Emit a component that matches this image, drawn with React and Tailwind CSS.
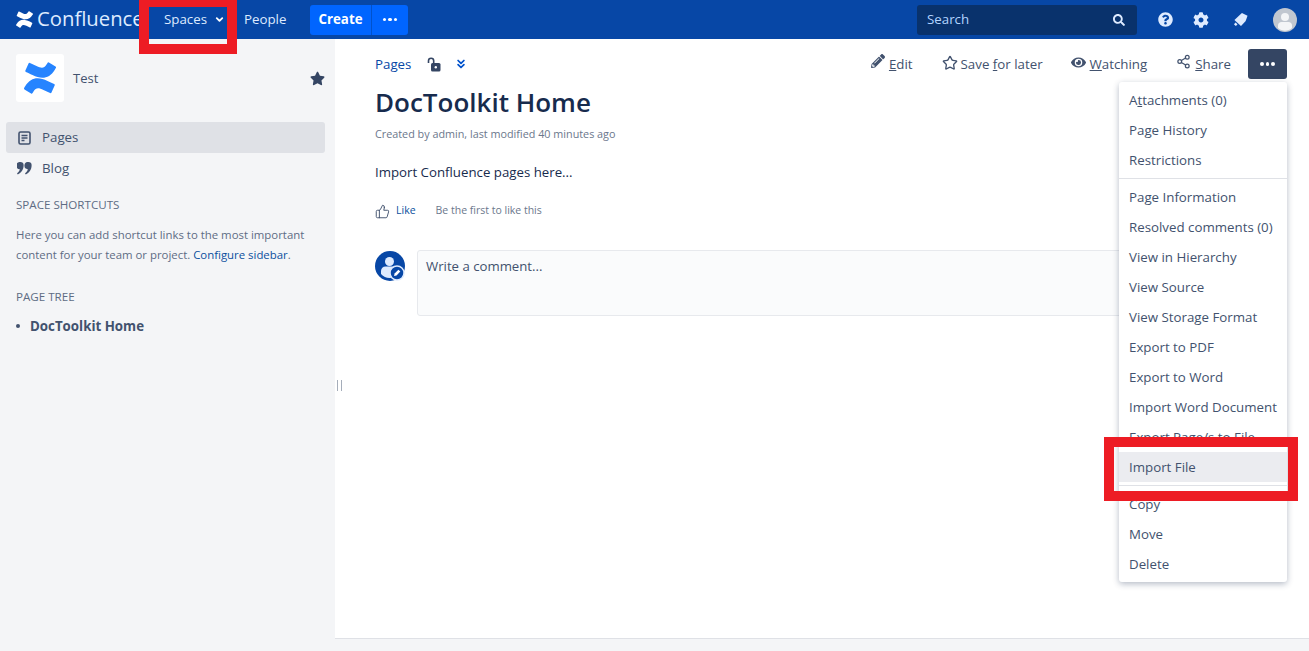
import { FaSearch, FaQuestionCircle, FaStar, FaPencilAlt, FaEye, FaCog } from "react-icons/fa";
import { SiConfluence } from "react-icons/si";
import { Star, Share2, ThumbsUp, ChevronsDown, ChevronDown } from "lucide-react";

const font = "font-['Open_Sans','Noto_Sans',sans-serif]";

function Dots({ className }) {
  return (
    <span className={"flex gap-[2px] " + className}>
      <span className="w-[3.5px] h-[3.5px] rounded-full bg-white" />
      <span className="w-[3.5px] h-[3.5px] rounded-full bg-white" />
      <span className="w-[3.5px] h-[3.5px] rounded-full bg-white" />
    </span>
  );
}

function Avatar({ size, bg, fg }) {
  return (
    <svg width={size} height={size} viewBox="0 0 24 24">
      <circle cx="12" cy="12" r="12" fill={bg} />
      <circle cx="12" cy="9" r="4" fill={fg} />
      <path d="M5 20v-2.500c0-2 1.500-3.500 3.500-3.500h7c2 0 3.500 1.500 3.500 3.500v2.500c-2 1.800-4.500 2.700-7 2.700s-5-.9-7-2.700z" fill={fg} />
    </svg>
  );
}

function CommentAvatar() {
  return (
    <svg width="30" height="30" viewBox="0 0 30 30">
      <circle cx="15" cy="15" r="15" fill="#0747a6" />
      <circle cx="14.500" cy="10.500" r="4.500" fill="#deebff" />
      <path d="M6 23v-3c0-2.500 2-4.500 4.500-4.500h8c2.500 0 4.500 2 4.500 4.500v3c-2.500 2.500-5 4-8.500 4S8.500 25.500 6 23z" fill="#deebff" />
      <circle cx="22" cy="22" r="7" fill="#0747a6" stroke="#deebff" strokeWidth="1.500" />
      <path d="M19 25l.6-2.500 3.800-3.800 1.900 1.900-3.800 3.800z" fill="#fff" />
    </svg>
  );
}

function TopNav() {
  return (
    <header className="h-[39px] shrink-0 bg-[#0747a6] flex items-center text-[#deebff] text-[13.300px]">
      <div className="flex items-center ml-[16px] w-[148px] shrink-0">
        <SiConfluence className="text-white w-[17px] h-[17px]" />
        <span className="ml-[4px] text-[20.300px] text-[#deebff] leading-none pb-[2px]">Confluence</span>
      </div>
      <div className="flex items-center w-[80px] shrink-0">
        <span>Spaces</span>
        <ChevronDown className="ml-[7px] w-[11px] h-[11px] text-white" strokeWidth={4} />
      </div>
      <span className="w-[66px] shrink-0">People</span>
      <div className="h-[30px] flex rounded-[3px] overflow-hidden bg-[#0065ff] text-white">
        <span className="w-[62px] flex items-center justify-center font-bold border-r border-[#0052cc]">Create</span>
        <span className="w-[36px] flex items-center justify-center"><Dots /></span>
      </div>
      <div className="ml-auto w-[220px] h-[30px] rounded-[3px] bg-[#09326c] flex items-center justify-between pl-[10px] pr-[12px] text-[#b3d4ff]">
        <span>Search</span>
        <FaSearch className="text-[#deebff] w-[12px] h-[12px]" />
      </div>
      <FaQuestionCircle className="ml-[21px] w-[15px] h-[15px] text-[#deebff]" />
      <FaCog className="ml-[20px] w-[16px] h-[16px] text-[#deebff]" />
      <svg className="ml-[24px]" width="15" height="15" viewBox="0 0 16 16">
        <path d="M9.500 1l6 3-2 5.500-5 5.500-7-6.500z" fill="#deebff" />
        <path d="M1 13l1.800-1.800 2 2L3 15z" fill="#deebff" />
      </svg>
      <span className="ml-[25px] mr-[12px]"><Avatar size={24} bg="#c1c7d0" fg="#f4f5f7" /></span>
    </header>
  );
}

function Sidebar() {
  return (
    <aside className="w-[335px] shrink-0 bg-[#f4f5f7] text-[#42526e] relative">
      <div className="flex items-center pl-[16px] pr-[10px] pt-[15px]">
        <div className="w-[48px] h-[48px] bg-white rounded-[3px] flex items-center justify-center">
          <SiConfluence className="w-[32px] h-[32px] text-[#2684ff]" />
        </div>
        <span className="ml-[9px] text-[13px] flex-1 pt-[2px]">Test</span>
        <FaStar className="w-[15px] h-[15px] text-[#344563]" />
      </div>
      <nav className="mt-[20px] ml-[6px] mr-[10px] text-[13.300px]">
        <div className="h-[31px] rounded-[3px] bg-[#dfe1e6] flex items-center pl-[12px]">
          <svg width="13" height="14" viewBox="0 0 13 14" fill="none" stroke="#42526e" strokeWidth="1.600">
            <rect x="1" y="1" width="11" height="12" rx="1.500" />
            <path d="M3.500 4.500h6M3.500 7h6M3.500 9.500h3" />
          </svg>
          <span className="ml-[11px]">Pages</span>
        </div>
        <div className="h-[31px] flex items-center pl-[11px]">
          <svg width="15" height="13" viewBox="0 0 15 13" fill="#42526e">
            <path d="M3.300 0a3.300 3.300 0 0 1 3.300 3.500c0 4-2.500 7.500-5.800 9l-.8-1.200c1.500-1 2.500-2.300 2.800-4.100A3.300 3.300 0 0 1 3.300 0z" />
            <path d="M11.300 0a3.300 3.300 0 0 1 3.300 3.500c0 4-2.500 7.500-5.800 9L8 11.300c1.500-1 2.500-2.300 2.800-4.100A3.300 3.300 0 0 1 11.300 0z" />
          </svg>
          <span className="ml-[10px]">Blog</span>
        </div>
      </nav>
      <h3 className="mt-[13px] ml-[16px] text-[11.600px] leading-[16px] text-[#5e6c84]">SPACE SHORTCUTS</h3>
      <p className="mt-[12px] mx-[16px] text-[11.400px] leading-[20px] text-[#5e6c84]">
        Here you can add shortcut links to the most important content for your team or project. <span className="text-[#0b4f9e]">Configure sidebar</span>.
      </p>
      <h3 className="mt-[24px] ml-[16px] text-[11.600px] leading-[16px] text-[#5e6c84]">PAGE TREE</h3>
      <div className="mt-[11px] ml-[16px] flex items-center text-[13.300px] font-bold text-[#42526e] leading-[20px]">
        <span className="w-[4px] h-[4px] rounded-full bg-[#42526e]" />
        <span className="ml-[10px]">DocToolkit Home</span>
      </div>
      <div className="absolute left-[337px] top-[341px] w-[5px] h-[11px] border-x border-[#a5adba] z-10" />
    </aside>
  );
}

function ActionBar() {
  return (
    <div className="h-[30px] flex items-center text-[13.300px] text-[#42526e]">
      <span className="text-[#0747a6] pt-[2px]">Pages</span>
      <svg className="ml-[16px]" width="14" height="15" viewBox="0 0 14 15">
        <path d="M1.500 6V3.800a2.600 2.600 0 0 1 5.200 0V7" fill="none" stroke="#344563" strokeWidth="1.600" />
        <rect x="4" y="6" width="9.500" height="8.500" rx="1.500" fill="#344563" />
        <circle cx="8.800" cy="10.200" r="1.200" fill="#fff" />
      </svg>
      <ChevronsDown className="ml-[13px] w-[14px] h-[14px] text-[#0052cc]" strokeWidth={3} />
      <div className="ml-auto flex items-center">
        <div className="flex items-center pt-[2px]">
          <FaPencilAlt className="w-[14px] h-[14px] mb-[8px] text-[#42526e]" />
          <span className="ml-[4px]"><u>E</u>dit</span>
          <Star className="ml-[29px] w-[16px] h-[16px] mb-[4px] text-[#42526e]" strokeWidth={2} />
          <span className="ml-[3px]">Save <u>f</u>or later</span>
          <FaEye className="ml-[28px] w-[15px] h-[15px] mb-[6px] text-[#42526e]" />
          <span className="ml-[4px]"><u>W</u>atching</span>
          <Share2 className="ml-[29px] w-[15px] h-[15px] mb-[7px] text-[#42526e]" />
          <span className="ml-[4px]"><u>S</u>hare</span>
        </div>
        <span className="ml-[17px] w-[39px] h-[30px] rounded-[3px] bg-[#344563] flex items-center justify-center"><Dots /></span>
      </div>
    </div>
  );
}

function MenuItem({ children, active }) {
  return (
    <div className={"h-[30px] flex items-center pl-[10px] pt-[2px] text-[13.300px] text-[#42526e] " + (active ? "bg-[#ebecf0]" : "")}>
      <span>{children}</span>
    </div>
  );
}

function Menu() {
  return (
    <div className="absolute top-[43px] right-[22px] w-[168px] bg-white rounded-[3px] shadow-[0_2px_6px_rgba(9,30,66,0.3)] py-[3px]">
      <MenuItem>A<u>t</u>tachments (0)</MenuItem>
      <MenuItem>Page History</MenuItem>
      <MenuItem>Restrictions</MenuItem>
      <div className="my-[3px] h-px bg-[#dfe1e6]" />
      <MenuItem>Page Information</MenuItem>
      <MenuItem>Resolved comments (0)</MenuItem>
      <MenuItem>View in Hierarchy</MenuItem>
      <MenuItem>View Source</MenuItem>
      <MenuItem>View Storage Format</MenuItem>
      <MenuItem>Export to PDF</MenuItem>
      <MenuItem>Export to Word</MenuItem>
      <MenuItem>Import Word Document</MenuItem>
      <MenuItem>Export Page/s to File</MenuItem>
      <MenuItem active>Import File</MenuItem>
      <div className="my-[3px] h-px bg-[#dfe1e6]" />
      <MenuItem>Copy</MenuItem>
      <MenuItem>Move</MenuItem>
      <MenuItem>Delete</MenuItem>
    </div>
  );
}

export default function App() {
  return (
    <div className={"h-screen w-full flex flex-col bg-white overflow-hidden relative " + font}>
      <TopNav />
      <div className="flex flex-1 min-h-0">
        <Sidebar />
        <main className="flex-1 relative flex flex-col">
          <div className="flex-1 pl-[40px] pr-[22px] pt-[10px]">
            <ActionBar />
            <h1 className="mt-[6px] text-[26px] leading-[34px] font-semibold text-[#172b4d]">DocToolkit Home</h1>
            <p className="mt-[5px] text-[10.800px] leading-[20px] text-[#6b778c]">Created by admin, last modified 40 minutes ago</p>
            <p className="mt-[18px] text-[13.250px] leading-[20px] text-[#172b4d]">Import Confluence pages here...</p>
            <div className="mt-[19px] h-[20px] flex items-center text-[10.500px]">
              <ThumbsUp className="w-[15px] h-[15px] text-[#42526e]" strokeWidth={1.500} />
              <span className="ml-[6px] text-[#0b4f9e]">Like</span>
              <span className="ml-[20px] text-[#6b778c]">Be the first to like this</span>
            </div>
            <div className="mt-[29px] flex items-start mr-[18px]">
              <span className="mt-[1px]"><CommentAvatar /></span>
              <div className="ml-[12px] flex-1 h-[66px] bg-[#fafbfc] border border-[#e7e9ed] rounded-[3px] pl-[8px] pt-[5px] text-[13.200px] leading-[20px] text-[#42526e]">Write a comment...</div>
            </div>
          </div>
          <div className="h-[13px] shrink-0 bg-[#f4f5f7] border-t border-[#dfe1e6]" />
          <Menu />
        </main>
      </div>
      <div className="absolute left-[139px] top-0 w-[98px] h-[54px] border-x-[10px] border-b-[10px] border-t-[7px] border-[#ed1c24]" />
      <div className="absolute left-[1104px] top-[437px] w-[194px] h-[64px] border-[10px] border-[#ed1c24]" />
    </div>
  );
}
